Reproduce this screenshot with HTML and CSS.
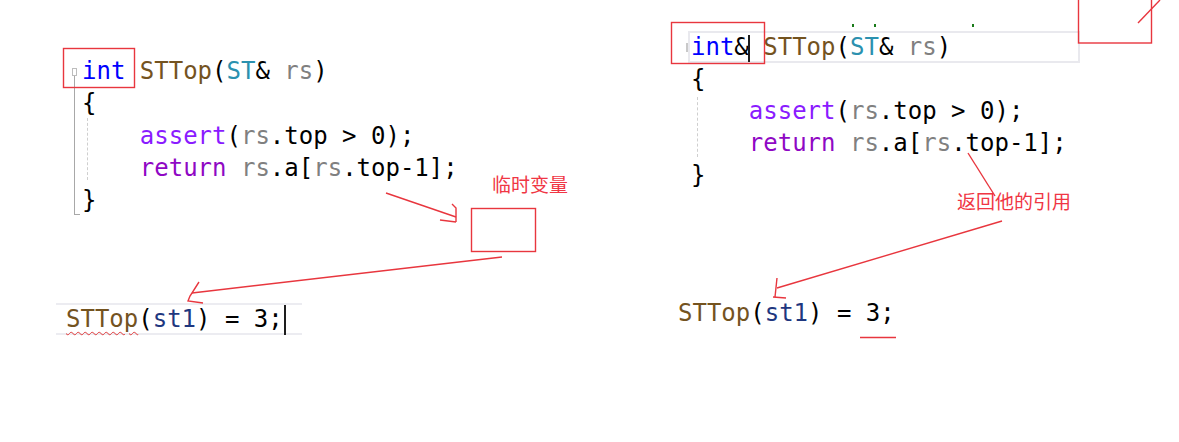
FILE: index.html
```html
<!DOCTYPE html>
<html lang="zh">
<head>
<meta charset="utf-8">
<title>STTop</title>
<link rel="stylesheet" href="styles.css">
</head>
<body>
<div class="page">
  <section class="panel panel-left">
    <div class="code code-left">
      <div class="line first"><span class="kw">int</span> <span class="fn">STTop</span>(<span class="ty">ST</span>&amp; <span class="param">rs</span>)</div>
      <div class="line">{</div>
      <div class="line">    <span class="macro">assert</span>(<span class="param">rs</span>.top &gt; 0);</div>
      <div class="line">    <span class="ctl">return</span> <span class="param">rs</span>.a[<span class="param">rs</span>.top-1];</div>
      <div class="line">}</div>
    </div>
    <div class="call call-left"><span class="fn squiggle">STTop</span>(<span class="var">st1</span>) = 3;<span class="caret"></span></div>
  </section>
  <section class="panel panel-right">
    <div class="code code-right">
      <div class="line current"><span class="kw">int</span>&amp;<span class="caret caret-small"></span> <span class="fn">STTop</span>(<span class="ty">ST</span>&amp; <span class="param">rs</span>)</div>
      <div class="line">{</div>
      <div class="line">    <span class="macro">assert</span>(<span class="param">rs</span>.top &gt; 0);</div>
      <div class="line">    <span class="ctl">return</span> <span class="param">rs</span>.a[<span class="param">rs</span>.top-1];</div>
      <div class="line">}</div>
    </div>
    <div class="call call-right"><span class="fn">STTop</span>(<span class="var">st1</span>) = 3;</div>
  </section>

  <svg class="annotations" width="1179" height="442" viewBox="0 0 1179 442" xmlns="http://www.w3.org/2000/svg">
    <g fill="#1a7a1a">
      <rect x="852" y="24" width="2" height="3"/>
      <rect x="874" y="24" width="2" height="3"/>
      <rect x="972" y="24" width="2" height="3"/>
    </g>
    <g fill="none" stroke="#e8363e" stroke-width="1.4">
      <rect x="63.5" y="48.5" width="71" height="39"/>
      <rect x="671.5" y="22.5" width="93" height="41"/>
      <rect x="1078.5" y="-2" width="73" height="45"/>
      <rect x="471.5" y="208.5" width="64" height="43"/>
      <line x1="1138" y1="23" x2="1160" y2="0"/>
      <!-- arrow 1 -->
      <line x1="386" y1="193" x2="456" y2="217"/>
      <polyline points="452,204 456,208 456,222"/>
      <line x1="440" y1="220" x2="456" y2="222"/>
      <!-- arrow 2 -->
      <line x1="502" y1="257" x2="192" y2="293"/>
      <polyline points="199,282 190,296 188,301 203,303"/>
      <!-- right pointer -->
      <line x1="968" y1="153" x2="995" y2="196"/>
      <!-- arrow 3 -->
      <line x1="1002" y1="221" x2="777" y2="288"/>
      <line x1="777" y1="278" x2="775" y2="297"/>
      <line x1="773" y1="297" x2="786" y2="298"/>
      <!-- underline -->
      <line x1="860" y1="337.5" x2="896" y2="337.5"/>
    </g>
  </svg>
  <span class="note note-temp">临时变量</span>
  <span class="note note-ref">返回他的引用</span>
</div>
</body>
</html>
```

FILE: styles.css
```css
html, body {
  margin: 0;
  padding: 0;
  background: #ffffff;
}

.page {
  position: relative;
  width: 1179px;
  height: 442px;
  overflow: hidden;
  display: grid;
  grid-template-columns: 612px 1fr;
  font-family: "DejaVu Sans Mono", "Liberation Mono", monospace;
  font-size: 24px;
  color: #000000;
}

.panel {
  display: flex;
  flex-direction: column;
  align-items: flex-start;
}

.code {
  position: relative;
}

.line {
  white-space: pre;
  line-height: 32px;
  height: 32px;
}

/* syntax colours */
.kw { color: #0000ff; }
.fn { color: #74531f; }
.ty { color: #2b91af; }
.param { color: #808080; }
.macro { color: #8a1bff; }
.ctl { color: #8f08c4; }
.var { color: #1f377f; }

/* ---------- left panel ---------- */
.code-left {
  margin-top: 55px;
  margin-left: 82px;
}

.code-left .line {
  height: 32.25px;
  line-height: 32.25px;
}

.code-left::before {
  content: "";
  position: absolute;
  left: -8px;
  top: 21px;
  width: 5px;
  height: 138px;
  border-left: 1px solid #a8a8a8;
  border-bottom: 1px solid #a8a8a8;
}

.code-left::after {
  content: "";
  position: absolute;
  left: 5px;
  top: 63px;
  height: 62px;
  border-left: 1px dashed #cfcfcf;
}

.code-left .first::before {
  content: "";
  position: absolute;
  left: -10px;
  top: 13px;
  width: 3px;
  height: 6px;
  border: 1px solid #bdbdbd;
}

.call {
  white-space: pre;
}

.call-left {
  box-sizing: border-box;
  margin-top: 87px;
  margin-left: 56px;
  width: 246px;
  padding-left: 10px;
  line-height: 28px;
  height: 32px;
  border-top: 2px solid #ececf1;
  border-bottom: 2px solid #ececf1;
}

.squiggle {
  text-decoration: underline wavy #e03a3a;
  text-decoration-thickness: 1px;
  text-underline-offset: 4px;
}

.caret {
  display: inline-block;
  width: 2px;
  height: 30px;
  margin-left: 1px;
  margin-right: -3px;
  background: #1e1e1e;
  vertical-align: middle;
}

/* ---------- right panel ---------- */
.code-right {
  margin-top: 31px;
  margin-left: 76px;
}

.code-right .line {
  margin-left: 3px;
}

.code-right .current {
  position: relative;
  box-sizing: border-box;
  margin-left: 0;
  width: 392px;
  height: 32px;
  line-height: 28px;
  padding-left: 1px;
  border: 2px solid #e9e9ee;
}

.code-right .current::before {
  content: "";
  position: absolute;
  left: -4px;
  top: 10px;
  width: 2px;
  height: 9px;
  background: #c9c9c9;
}

.code-right::after {
  content: "";
  position: absolute;
  left: 9px;
  top: 66px;
  height: 60px;
  border-left: 1px dashed #cfcfcf;
}

.caret-small {
  height: 27px;
  margin-left: -1px;
  margin-right: -1px;
}

.call-right {
  margin-top: 106px;
  margin-left: 66px;
  line-height: 32px;
}

/* ---------- annotations ---------- */
.annotations {
  position: absolute;
  left: 0;
  top: 0;
  pointer-events: none;
}

.note {
  position: absolute;
  font-family: "Noto Sans CJK SC", "Microsoft YaHei", sans-serif;
  font-size: 19px;
  line-height: 1;
  color: #f03644;
  white-space: nowrap;
}

.note-temp {
  left: 492px;
  top: 174px;
}

.note-ref {
  left: 957px;
  top: 191px;
}
```
